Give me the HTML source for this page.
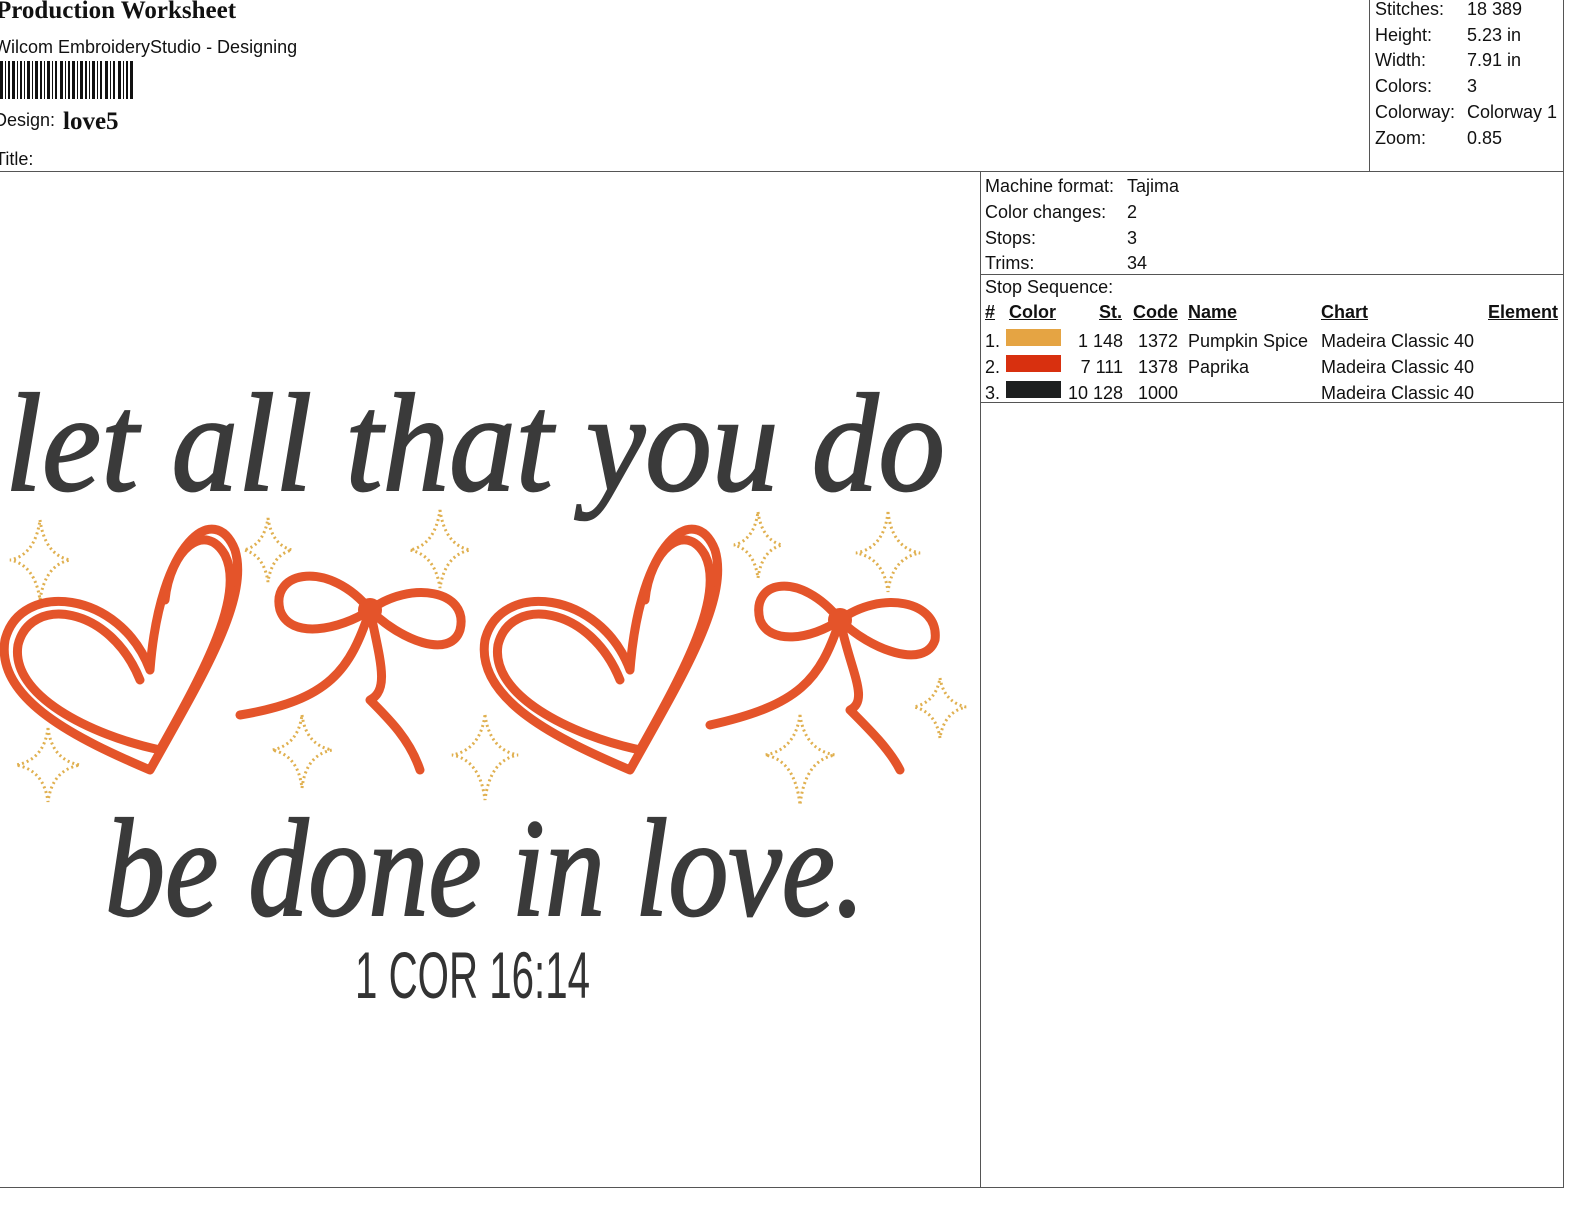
<!DOCTYPE html>
<html><head><meta charset="utf-8"><style>
body{margin:0;width:1588px;height:1205px;background:#fff;position:relative;overflow:hidden;font-family:"Liberation Sans",sans-serif;color:#111}
.a{position:absolute;white-space:nowrap;font-size:18px}
.l{position:absolute;background:#555}
u{text-decoration:underline}
</style></head><body>
<div class="a" style="left:-4px;top:-3px;font-family:'Liberation Serif',serif;font-weight:bold;font-size:25px">Production Worksheet</div>
<div class="a" style="left:-6px;top:37px">Wilcom EmbroideryStudio - Designing</div>
<svg style="position:absolute;left:0;top:61px" width="134" height="38">
<g fill="#111">
<rect x="0" width="3" height="38"/><rect x="5" width="1" height="38"/><rect x="8" width="2" height="38"/><rect x="12" width="3" height="38"/><rect x="17" width="1" height="38"/><rect x="20" width="2" height="38"/><rect x="24" width="1" height="38"/><rect x="27" width="3" height="38"/><rect x="32" width="1" height="38"/><rect x="35" width="3" height="38"/><rect x="40" width="2" height="38"/><rect x="44" width="1" height="38"/><rect x="47" width="3" height="38"/><rect x="52" width="1" height="38"/><rect x="55" width="2" height="38"/><rect x="60" width="3" height="38"/><rect x="65" width="1" height="38"/><rect x="68" width="2" height="38"/><rect x="72" width="3" height="38"/><rect x="77" width="1" height="38"/><rect x="80" width="3" height="38"/><rect x="85" width="2" height="38"/><rect x="89" width="1" height="38"/><rect x="92" width="3" height="38"/><rect x="97" width="1" height="38"/><rect x="100" width="2" height="38"/><rect x="105" width="3" height="38"/><rect x="110" width="1" height="38"/><rect x="113" width="2" height="38"/><rect x="118" width="3" height="38"/><rect x="123" width="1" height="38"/><rect x="126" width="2" height="38"/><rect x="130" width="3" height="38"/>
</g></svg>
<div class="a" style="left:-6px;top:110px">Design:</div>
<div class="a" style="left:63px;top:108px;font-family:'Liberation Serif',serif;font-weight:bold;font-size:25px">love5</div>
<div class="a" style="left:-5px;top:149px">Title:</div>

<div class="l" style="left:0;top:171px;width:1564px;height:1px"></div>
<div class="l" style="left:1369px;top:0;width:1px;height:172px"></div>
<div class="l" style="left:1563px;top:0;width:1px;height:1188px"></div>
<div class="l" style="left:980px;top:172px;width:1px;height:1016px"></div>
<div class="l" style="left:0;top:1187px;width:1564px;height:1px"></div>
<div class="l" style="left:980px;top:274px;width:584px;height:1px"></div>
<div class="l" style="left:980px;top:402px;width:584px;height:1px"></div>

<div class="a" style="left:1375px;top:-3px;line-height:25.7px">Stitches:<br>Height:<br>Width:<br>Colors:<br>Colorway:<br>Zoom:</div>
<div class="a" style="left:1467px;top:-3px;line-height:25.7px">18 389<br>5.23 in<br>7.91 in<br>3<br>Colorway 1<br>0.85</div>

<div class="a" style="left:985px;top:174px;line-height:25.8px">Machine format:<br>Color changes:<br>Stops:<br>Trims:</div>
<div class="a" style="left:1127px;top:174px;line-height:25.8px">Tajima<br>2<br>3<br>34</div>
<div class="a" style="left:985px;top:277px">Stop Sequence:</div>
<div class="a" style="left:985px;top:302px;font-weight:bold"><u>#</u></div>
<div class="a" style="left:1009px;top:302px;font-weight:bold"><u>Color</u></div>
<div class="a" style="left:1099px;top:302px;font-weight:bold"><u>St.</u></div>
<div class="a" style="left:1133px;top:302px;font-weight:bold"><u>Code</u></div>
<div class="a" style="left:1188px;top:302px;font-weight:bold"><u>Name</u></div>
<div class="a" style="left:1321px;top:302px;font-weight:bold"><u>Chart</u></div>
<div class="a" style="left:1488px;top:302px;font-weight:bold"><u>Element</u></div>
<div class="a" style="left:985px;top:328px;line-height:26px">1.<br>2.<br>3.</div>
<div style="position:absolute;left:1006px;top:329px;width:55px;height:17px;background:#e5a443"></div>
<div style="position:absolute;left:1006px;top:355px;width:55px;height:17px;background:#d8300f"></div>
<div style="position:absolute;left:1006px;top:381px;width:55px;height:17px;background:#1d1f1f"></div>
<div class="a" style="left:1063px;top:328px;line-height:26px;width:60px;text-align:right">1 148<br>7 111<br>10 128</div>
<div class="a" style="left:1138px;top:328px;line-height:26px">1372<br>1378<br>1000</div>
<div class="a" style="left:1188px;top:328px;line-height:26px">Pumpkin Spice<br>Paprika</div>
<div class="a" style="left:1321px;top:328px;line-height:26px">Madeira Classic 40<br>Madeira Classic 40<br>Madeira Classic 40</div>

<svg style="position:absolute;left:0;top:340px" width="980" height="680">
<g fill="none" stroke="#e0b050" stroke-width="3" stroke-dasharray="2 3">
<path d="M40 180 Q45 215 70 220 Q45 225 40 260 Q35 225 10 220 Q35 215 40 180Z"/>
<path d="M268 178 Q272 205 292 210 Q272 215 268 242 Q264 215 244 210 Q264 205 268 178Z"/>
<path d="M440 170 Q445 205 470 210 Q445 215 440 248 Q435 215 410 210 Q435 205 440 170Z"/>
<path d="M758 172 Q762 200 782 205 Q762 210 758 238 Q754 210 734 205 Q754 200 758 172Z"/>
<path d="M888 172 Q892 208 920 213 Q892 218 888 252 Q884 218 856 213 Q884 208 888 172Z"/>
<path d="M940 338 Q944 362 966 367 Q944 372 940 398 Q936 372 914 367 Q936 362 940 338Z"/>
<path d="M48 388 Q52 420 80 425 Q52 430 48 462 Q44 430 16 425 Q44 420 48 388Z"/>
<path d="M302 375 Q306 405 332 410 Q306 415 302 448 Q298 415 272 410 Q298 405 302 375Z"/>
<path d="M485 375 Q490 410 518 415 Q490 420 485 460 Q480 420 452 415 Q480 410 485 375Z"/>
<path d="M800 375 Q805 410 835 415 Q805 420 800 465 Q795 420 765 415 Q795 410 800 375Z"/>
</g>
<g fill="none" stroke="#e4542a" stroke-width="9" stroke-linecap="round" stroke-linejoin="round">
<path d="M150 330 C120 250 20 240 5 300 C-5 360 80 400 150 430 C200 340 250 260 235 210 C215 160 160 200 150 330"/>
<path d="M140 340 C110 265 30 255 18 305 C10 355 90 395 160 410 C205 330 245 255 225 215 C205 180 170 210 165 260"/>
<path d="M630 330 C600 250 500 240 485 300 C475 360 560 400 630 430 C680 340 730 260 715 210 C695 160 640 200 630 330"/>
<path d="M620 340 C590 265 510 255 498 305 C490 355 570 395 640 410 C685 330 725 255 705 215 C685 180 650 210 645 260"/>
<path d="M370 270 C330 220 270 230 280 270 C290 300 340 290 370 270 C410 240 470 250 460 290 C450 320 400 300 370 270 C350 330 330 360 240 375 M370 270 C380 320 390 350 370 360 C390 380 410 400 420 430"/>
<path d="M840 280 C800 230 750 240 760 280 C770 305 810 300 840 280 C880 250 940 260 935 300 C925 330 870 310 840 280 C820 340 800 365 710 385 M840 280 C850 330 870 360 850 370 C870 390 890 410 900 430"/>
</g>
<circle cx="370" cy="270" r="12" fill="#e4542a"/><circle cx="840" cy="280" r="12" fill="#e4542a"/>
<g font-family="'Liberation Serif',serif" font-style="italic" fill="#3a3a3a" stroke="#3a3a3a" stroke-width="2">
<text x="5" y="150" font-size="140" textLength="940" lengthAdjust="spacingAndGlyphs">let all that you do</text>
<text x="105" y="575" font-size="140" textLength="760" lengthAdjust="spacingAndGlyphs">be done in love.</text>
</g>
<text x="355" y="658" font-family="'Liberation Sans Narrow','Liberation Sans',sans-serif" font-size="66" fill="#333" textLength="235" lengthAdjust="spacingAndGlyphs">1 COR 16:14</text>
</svg>
</body></html>
